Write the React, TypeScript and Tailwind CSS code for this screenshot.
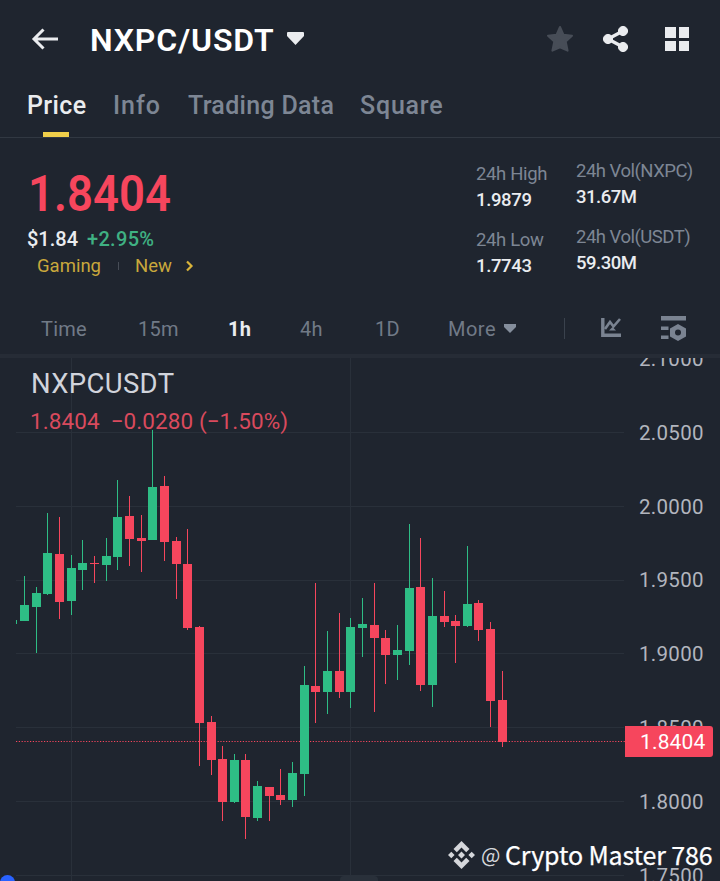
type Candle = [x: number, up: boolean, top: number, bottom: number, high: number, low: number];

const UP = "#2ebd85";
const DOWN = "#f6465d";

// x is the left edge of the wick, the rest are y positions
const CANDLES: Candle[] = [
  [24, true, 605, 621, 576, 621],
  [36, true, 593, 607, 587, 653],
  [47, true, 553, 594, 513, 595],
  [59, false, 554, 602, 517, 619],
  [71, true, 568, 601, 555, 615],
  [82, true, 563, 570, 540, 590],
  [94, false, 563, 564, 556, 583],
  [106, true, 556, 565, 538, 581],
  [117, true, 517, 557, 480, 570],
  [129, false, 516, 539, 496, 566],
  [141, false, 538, 541, 515, 572],
  [152, true, 487, 540, 430, 540],
  [164, false, 486, 542, 476, 561],
  [176, false, 541, 564, 537, 599],
  [187, false, 564, 628, 529, 630],
  [199, false, 627, 723, 626, 766],
  [211, false, 722, 760, 716, 775],
  [222, false, 759, 802, 746, 821],
  [234, true, 760, 802, 754, 803],
  [245, false, 760, 817, 754, 839],
  [257, true, 786, 818, 781, 821],
  [269, false, 787, 796, 787, 821],
  [280, false, 795, 800, 769, 805],
  [292, true, 773, 800, 762, 807],
  [304, true, 685, 774, 666, 796],
  [315, false, 686, 692, 583, 723],
  [327, true, 671, 692, 631, 714],
  [339, false, 671, 692, 613, 698],
  [350, true, 627, 692, 618, 708],
  [362, true, 624, 628, 598, 657],
  [374, false, 625, 638, 583, 712],
  [385, false, 638, 655, 630, 684],
  [397, true, 650, 655, 625, 680],
  [409, true, 588, 651, 524, 665],
  [420, false, 587, 685, 538, 691],
  [432, true, 616, 685, 578, 707],
  [444, false, 616, 622, 591, 627],
  [455, false, 621, 626, 615, 663],
  [467, true, 604, 626, 546, 627],
  [478, false, 603, 630, 600, 641],
  [490, false, 629, 701, 622, 727],
  [502, false, 700, 742, 671, 747],
];

const GRID_Y = [432, 506, 580, 653, 727, 801, 875];
const GRID_X = [71, 350];
const PRICES = ["2.1000", "2.0500", "2.0000", "1.9500", "1.9000", "1.8500", "1.8000", "1.7500"];

function Header() {
  return (
    <header className="flex h-[78px] items-center pl-[31px] pr-[31px]">
      <svg width="28" height="22" viewBox="0 0 28 22" fill="none" stroke="#eaecef" strokeWidth="3">
        <path d="M12.500 1.500 3 11l9.500 9.500M3 11h24" />
      </svg>
      <h1 className="ml-[31px] mt-[2px] w-[183px] text-[32px] font-semibold leading-none tracking-[0.850px] text-white">NXPC/USDT</h1>
      <svg className="ml-[14px]" width="17" height="14" viewBox="0 0 17 14" fill="#eaecef">
        <path d="M0 1Q0 0 1 0h15q1 0 1 1v3L8.500 13 0 4z" />
      </svg>
      <div className="ml-auto flex items-center">
        <svg width="28" height="28" viewBox="0 0 28 28" fill="#474d57" stroke="#474d57" strokeWidth="2" strokeLinejoin="round">
          <path d="m14 2 3.500 7.800 8.500.9-6.300 5.700 1.900 9.300L14 22.400l-7.600 3.300 1.900-9.300L2 10.700l8.500-.9z" />
        </svg>
        <svg className="ml-[28px]" width="27" height="28" viewBox="0 0 27 28" fill="#eaecef" stroke="#eaecef">
          <path d="M21 6 6 14l15 8" fill="none" strokeWidth="3.400" />
          <circle cx="6" cy="14" r="4.600" />
          <circle cx="21" cy="6" r="4.600" />
          <circle cx="21" cy="22" r="4.600" />
        </svg>
        <div className="ml-[36px] grid grid-cols-2 gap-[3px]">
          <i className="size-[10.500px] bg-[#eaecef]" />
          <i className="size-[10.500px] bg-[#eaecef]" />
          <i className="size-[10.500px] bg-[#eaecef]" />
          <i className="size-[10.500px] bg-[#eaecef]" />
        </div>
      </div>
    </header>
  );
}

function Tabs() {
  return (
    <nav className="flex h-[60px] border-b border-[#313842] pl-[27px] pt-[12px] text-[25px] font-medium leading-[31px] text-[#7d8694]">
      <div className="flex w-[86px] flex-col text-[#eaecef]">
        <span className="tracking-[0.400px]">Price</span>
        <span className="ml-[16px] mt-auto h-[5px] w-[26px] bg-[#f0cf4a]" />
      </div>
      <span className="w-[75px] tracking-[1px]">Info</span>
      <span className="w-[172px] tracking-[0.300px]">Trading Data</span>
      <span className="tracking-[0.800px]">Square</span>
    </nav>
  );
}

function Stat({ label, value }: { label: string; value: string }) {
  return (
    <div className="h-[66px]">
      <div className="whitespace-nowrap text-[18.500px] leading-[26px] text-[#7d8694]">{label}</div>
      <div className="text-[18.500px] font-medium leading-[26px] text-[#eaecef]">{value}</div>
    </div>
  );
}

function Summary() {
  return (
    <section className="flex h-[164px]">
      <div className="w-[476px] pl-[27px] pt-[28px]">
        <div className="ml-px w-fit origin-left scale-x-[0.910] text-[50px] font-semibold leading-[56px] text-[#f6465d]">1.8404</div>
        <div className="mt-[4px] flex gap-[9px] text-[20px] font-medium leading-[27px]">
          <span className="text-[#eaecef]">$1.84</span>
          <span className="tracking-[0.300px] text-[#3fb183]">+2.95%</span>
        </div>
        <div className="flex items-center pl-[10px] text-[18.500px] leading-[26px] text-[#c9a83c]">
          <span className="w-[64px]">Gaming</span>
          <i className="ml-[17px] h-[8px] w-px bg-[#474d57]" />
          <span className="ml-[16px] w-[37px]">New</span>
          <svg className="ml-[14px]" width="8" height="12" viewBox="0 0 8 12" fill="none" stroke="#d9b43a" strokeWidth="2.200">
            <path d="m1 1.500 4.500 4.500L1 10.500" />
          </svg>
        </div>
      </div>
      <div className="w-[100px] pt-[23px] tracking-[-0.350px]">
        <Stat label="24h High" value="1.9879" />
        <Stat label="24h Low" value="1.7743" />
      </div>
      <div className="pt-[20px] tracking-[-0.500px]">
        <Stat label="24h Vol(NXPC)" value="31.67M" />
        <Stat label="24h Vol(USDT)" value="59.30M" />
      </div>
    </section>
  );
}

function Intervals() {
  return (
    <div className="flex h-[52px] items-center pl-[41px] text-[20px] tracking-[0.200px] text-[#717a87]">
      <span className="w-[97px] pt-[2px]">Time</span>
      <span className="w-[90px] pt-[2px]">15m</span>
      <span className="w-[72px] pt-[2px] font-bold text-[#eaecef]">1h</span>
      <span className="w-[75px] pt-[2px]">4h</span>
      <span className="w-[73px] pt-[2px]">1D</span>
      <span className="w-[56px] pt-[2px] tracking-[0.500px]">More</span>
      <svg width="12" height="9" viewBox="0 0 12 9" fill="#848e9c">
        <path d="M0 0h12v3L6 9 0 3z" />
      </svg>
      <i className="ml-[48px] h-[21px] w-px bg-[#3a424d]" />
      <svg className="ml-[36px]" width="20" height="20" viewBox="0 0 20 20" fill="none" stroke="#7a8391">
        <path d="M1.800 0v17.200H20" strokeWidth="3.400" />
        <path d="m4 11 5-7 3.500 4.500L19 1" strokeWidth="2.600" />
        <path d="m8 12.500 3.500-3.500 3.500 3.500z" fill="#7a8391" stroke="none" />
      </svg>
      <svg className="ml-[40px]" width="26" height="27" viewBox="0 0 26 27" fill="#7a8391">
        <path d="M0 1h25v4.500H0zM0 11.500h7.500V15H0zM0 20.500h7.500V24H0z" />
        <path fillRule="evenodd" d="m17 9 8 4.400v8.200L17 26l-8-4.400v-8.200zM17 14.500a3 3 0 1 0 0 6 3 3 0 0 0 0-6z" />
      </svg>
    </div>
  );
}

function CandleChart() {
  return (
    <svg className="block shrink-0" width="625" height="527" viewBox="0 354 625 527" shapeRendering="crispEdges">
      {GRID_Y.map((y) => (
        <rect key={y} x="16" y={y} width="608" height="1" fill="#29303a" />
      ))}
      {GRID_X.map((x) => (
        <rect key={x} x={x} y="357" width="1" height="524" fill="#29303a" />
      ))}
      <path d="M16 741.500H625" stroke={DOWN} strokeDasharray="1.200 1.600" shapeRendering="auto" />
      <rect x="16" y="620" width="1" height="4" fill={UP} />
      {CANDLES.map(([x, up, top, bottom, high, low]) => (
        <g key={x} fill={up ? UP : DOWN}>
          <rect x={x} y={high} width="1" height={low - high} />
          <rect x={x - 4} y={top} width="9" height={bottom - top} />
        </g>
      ))}
    </svg>
  );
}

function Watermark() {
  return (
    <div className="absolute bottom-[9px] right-[8px] flex items-center whitespace-nowrap font-['Noto_Sans_CJK_SC','Noto_Sans',sans-serif] text-[25px] leading-[36px] text-white">
      <svg width="27" height="28" viewBox="0 0 27 28" fill="#d5d7db">
        <path d="m13.500 0 8 8-3.300 3.300-4.700-4.700-4.700 4.700L5.500 8zM13.500 28l8-8-3.300-3.300-4.700 4.700-4.700-4.700L5.500 20z" />
        <path d="m13.500 10.500 3.500 3.500-3.500 3.500L10 14zM3.300 10.700 6.600 14l-3.300 3.300L0 14zM23.700 10.700 27 14l-3.300 3.300-3.300-3.300z" />
      </svg>
      <span className="-mt-[2px] ml-[6px] w-[20px] text-[20.500px] text-[#d5d7db]">@</span>
      <span className="-mt-[2px] ml-[4px] w-[207px] tracking-[-0.120px] [-webkit-text-stroke:0.250px_white]">Crypto Master 786</span>
    </div>
  );
}

export default function App() {
  return (
    <main className="h-[881px] w-[720px] overflow-hidden bg-[#1f252f] font-[Roboto,sans-serif]">
      <Header />
      <Tabs />
      <Summary />
      <Intervals />
      <section className="relative flex h-[527px] overflow-hidden">
        <CandleChart />
        <div className="-mt-[31.500px] flex flex-col pl-[14px] text-[20.500px] tracking-[0.300px] text-[#b2b5be]">
          {PRICES.map((price) => (
            <span key={price} className="flex h-[73.800px] shrink-0 items-center">
              {price}
            </span>
          ))}
        </div>
        <div className="absolute left-0 top-0 h-[4px] w-full bg-[#262c36]" />
        <div className="absolute left-[31px] top-[13px] whitespace-nowrap">
          <div className="text-[27.500px] leading-[34px] tracking-[0.350px] text-[#d1d4dc]">NXPCUSDT</div>
          <div className="-ml-px mt-[5px] flex gap-[11px] text-[22.500px] leading-[30px] tracking-[0.080px] text-[#d94a5d]">
            <span>1.8404</span>
            <span>−0.0280 (−1.50%)</span>
          </div>
        </div>
        <div className="absolute left-[625px] top-[372px] flex h-[31px] w-[88px] items-center rounded-r-[3px] bg-[#f6465d] pl-[15px] pt-[2px] text-[21px] tracking-[0.150px] text-white">
          1.8404
        </div>
        <i className="absolute -bottom-[9px] left-0 size-[15px] rounded-full bg-[#2962ff]" />
        <i className="absolute bottom-0 left-[340px] h-[5px] w-[38px] rounded-t bg-[#29303a]" />
        <Watermark />
      </section>
    </main>
  );
}
